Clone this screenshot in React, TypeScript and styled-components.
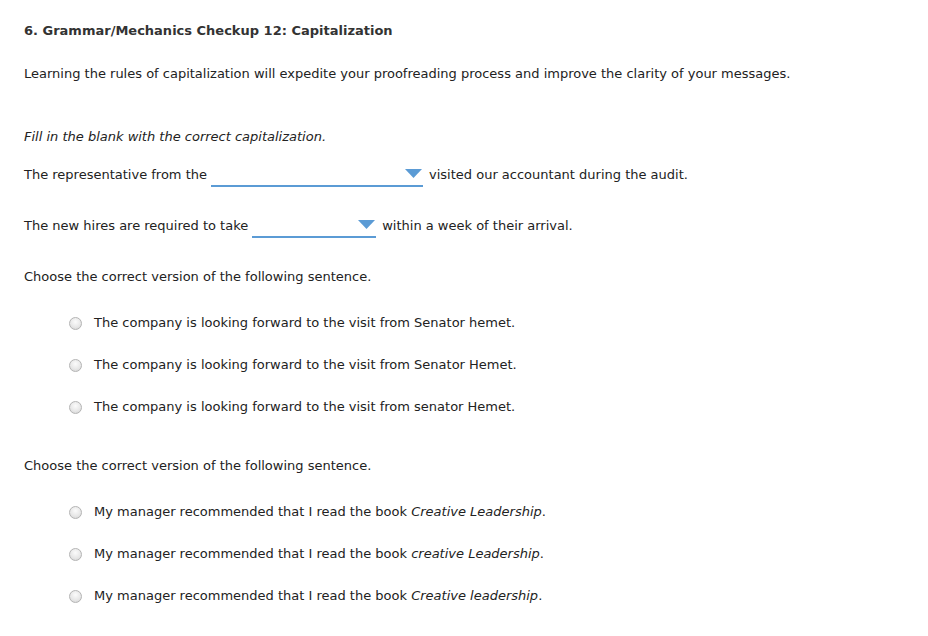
import React from "react";
import styled, { createGlobalStyle } from "styled-components";

const Global = createGlobalStyle`
  html, body { margin: 0; padding: 0; background: #fff; }
  body { font-family: "DejaVu Sans", Verdana, sans-serif; font-size: 13px; color: #222; }
`;

const Page = styled.div`
  padding: 22px 24px 0 24px;
  display: flex;
  flex-direction: column;
`;

const Title = styled.h1`
  margin: 0;
  font-size: 13px;
  font-weight: bold;
  color: #333;
  line-height: 18px;
`;

const Para = styled.p<{ $top: number; $italic?: boolean }>`
  margin: ${(p) => p.$top}px 0 0 0;
  line-height: 18px;
  font-style: ${(p) => (p.$italic ? "italic" : "normal")};
`;

const BlankLine = styled.div<{ $top: number }>`
  margin-top: ${(p) => p.$top}px;
  display: flex;
  align-items: center;
  height: 24px;
  line-height: 18px;
`;

const Select = styled.span<{ $w: number }>`
  display: inline-flex;
  justify-content: flex-end;
  align-items: center;
  width: ${(p) => p.$w}px;
  height: 20px;
  margin: 0 6px 0 4px;
  border-bottom: 2px solid #5b9bd5;
  position: relative;
  top: 1px;
`;

const Caret = styled.svg`
  width: 17px;
  height: 9px;
  margin-right: 1px;
  margin-bottom: 3px;
`;

const Options = styled.div<{ $top: number }>`
  margin-top: ${(p) => p.$top}px;
  padding-left: 45px;
  display: flex;
  flex-direction: column;
  gap: 24px;
`;

const Option = styled.label`
  display: flex;
  align-items: center;
  height: 18px;
  line-height: 18px;
`;

const Radio = styled.span`
  width: 13px;
  height: 13px;
  border-radius: 50%;
  box-sizing: border-box;
  border: 1px solid #b4b4b4;
  background: radial-gradient(circle at 50% 35%, #fbfbfb 0%, #e8e8e8 55%, #d2d2d2 100%);
  margin-right: 12px;
  flex: none;
`;

const Book = styled.i``;

const DropCaret = () => (
  <Caret viewBox="0 0 17 9">
    <polygon points="0,0 17,0 8.5,9" fill="#5b9bd5" />
  </Caret>
);

export default function App() {
  return (
    <>
      <Global />
      <Page>
        <Title>6. Grammar/Mechanics Checkup 12: Capitalization</Title>
        <Para $top={25}>
          Learning the rules of capitalization will expedite your proofreading process and improve the clarity of your messages.
        </Para>
        <Para $top={45} $italic>
          Fill in the blank with the correct capitalization.
        </Para>
        <BlankLine $top={17}>
          The representative from the
          <Select $w={212}>
            <DropCaret />
          </Select>
          visited our accountant during the audit.
        </BlankLine>
        <BlankLine $top={27}>
          The new hires are required to take
          <Select $w={124}>
            <DropCaret />
          </Select>
          within a week of their arrival.
        </BlankLine>
        <Para $top={30}>Choose the correct version of the following sentence.</Para>
        <Options $top={28}>
          <Option><Radio />The company is looking forward to the visit from Senator hemet.</Option>
          <Option><Radio />The company is looking forward to the visit from Senator Hemet.</Option>
          <Option><Radio />The company is looking forward to the visit from senator Hemet.</Option>
        </Options>
        <Para $top={41}>Choose the correct version of the following sentence.</Para>
        <Options $top={28}>
          <Option><Radio />My manager recommended that I read the book&nbsp;<Book>Creative Leadership</Book>.</Option>
          <Option><Radio />My manager recommended that I read the book&nbsp;<Book>creative Leadership</Book>.</Option>
          <Option><Radio />My manager recommended that I read the book&nbsp;<Book>Creative leadership</Book>.</Option>
        </Options>
      </Page>
    </>
  );
}
